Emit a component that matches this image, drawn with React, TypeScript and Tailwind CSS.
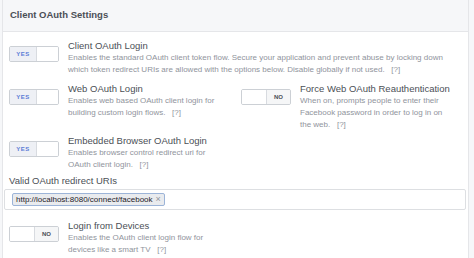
import React from 'react';

function Toggle({ on }: { on: boolean }) {
  return (
    <div className="flex h-[16px] w-[50px] shrink-0 overflow-hidden rounded-[2px] border border-[#ccd0d5] bg-white">
      {on ? (
        <>
          <div className="flex w-[26px] items-center justify-center bg-[#eef0f5] text-[6px] font-bold tracking-[0.5px] text-[#5b7bd5]">YES</div>
          <div className="flex-1 border-l border-[#d8dbe0] bg-white" />
        </>
      ) : (
        <>
          <div className="w-[25px] border-r border-[#d8dbe0] bg-white" />
          <div className="flex flex-1 items-center justify-center bg-[#f5f6f7] text-[6px] font-bold text-[#4b4f56]">NO</div>
        </>
      )}
    </div>
  );
}

function Setting({ on, title, desc, width }: { on: boolean; title: string; desc: string; width: string }) {
  return (
    <div className="flex gap-[9px]">
      <div className="pt-[6px]">
        <Toggle on={on} />
      </div>
      <div className={width}>
        <div className="text-[9.5px] leading-[12px] text-[#4b4f56]">{title}</div>
        <div className="text-[8px] leading-[12px] text-[#90949c]">{desc + '\u00a0\u00a0 [?]'}</div>
      </div>
    </div>
  );
}

export default function App() {
  return (
    <div className="h-[258px] w-[474px] overflow-hidden bg-[#f6f7f9]" style={{ fontFamily: '"Liberation Sans", Arial, sans-serif' }}>
      <div className="ml-[2px] h-full w-[467px] border-x border-[#e5e6e9] bg-white">
        <div className="flex h-[32px] items-center border-b border-[#e5e6e9] bg-[#f6f7f9] pl-[7px] text-[9.5px] font-bold text-[#4b4f56]">
          Client OAuth Settings
        </div>

        <div className="flex flex-col px-[6px] pt-[8px]">
          <Setting
            on
            title="Client OAuth Login"
            desc="Enables the standard OAuth client token flow. Secure your application and prevent abuse by locking down which token redirect URIs are allowed with the options below. Disable globally if not used."
            width="w-[390px]"
          />

          <div className="mt-[7px] flex">
            <div className="w-[232px]">
              <Setting
                on
                title="Web OAuth Login"
                desc="Enables web based OAuth client login for building custom login flows."
                width="w-[160px]"
              />
            </div>
            <Setting
              on={false}
              title="Force Web OAuth Reauthentication"
              desc="When on, prompts people to enter their Facebook password in order to log in on the web."
              width="w-[155px]"
            />
          </div>

          <div className="mt-[4px]">
            <Setting
              on
              title="Embedded Browser OAuth Login"
              desc="Enables browser control redirect uri for OAuth client login."
              width="w-[155px]"
            />
          </div>

          <div className="mt-[4px] text-[9.5px] leading-[12px] text-[#4b4f56]">Valid OAuth redirect URIs</div>
        </div>

        <div className="ml-[1px] mr-[2px] mt-[2px] flex h-[21px] items-center rounded-[2px] border border-[#dddfe2] px-[7px]">
          <div className="flex h-[13px] items-center gap-[3px] rounded-[2px] border border-[#9cb4d8] bg-[#e9ebee] px-[3px] text-[8px] text-[#1d2129]">
            http://localhost:8080/connect/facebook
            <span className="text-[9px] leading-none text-[#90949c]">×</span>
          </div>
        </div>

        <div className="mt-[10px] px-[6px]">
          <Setting
            on={false}
            title="Login from Devices"
            desc="Enables the OAuth client login flow for devices like a smart TV"
            width="w-[155px]"
          />
        </div>
      </div>
    </div>
  );
}
